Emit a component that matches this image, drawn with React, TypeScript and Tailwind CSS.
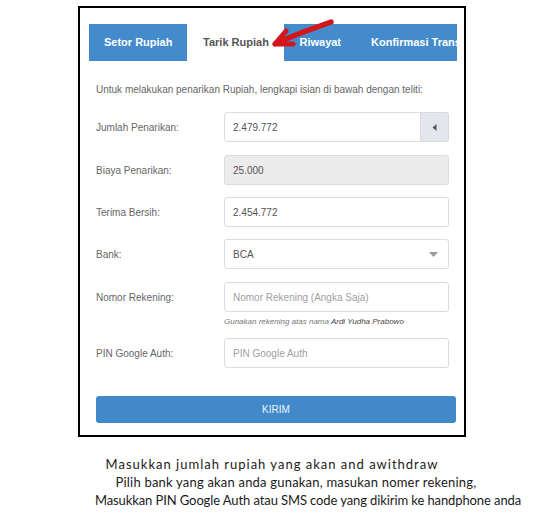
import React from "react";

const tabs = [
  { label: "Setor Rupiah", active: false },
  { label: "Tarik Rupiah", active: true },
  { label: "Riwayat", active: false },
  { label: "Konfirmasi Transfer", active: false },
];

const Label: React.FC<{ children: React.ReactNode }> = ({ children }) => (
  <div className="w-[128px] shrink-0 text-[10px] text-[#666]">{children}</div>
);

const TextField: React.FC<{ value?: string; placeholder?: string; disabled?: boolean }> = ({
  value,
  placeholder,
  disabled,
}) => (
  <div
    className={`w-[225px] h-[30px] flex items-center px-[8px] rounded-[3px] border border-[#dcdcdc] text-[10px] ${
      disabled ? "bg-[#ececec]" : "bg-white"
    } ${value ? "text-[#555]" : "text-[#a0a0a0]"}`}
  >
    {value ?? placeholder}
  </div>
);

const FormRow: React.FC<{ label: string; className?: string; children: React.ReactNode }> = ({
  label,
  className,
  children,
}) => (
  <div className={`flex items-center ${className ?? ""}`}>
    <Label>{label}</Label>
    {children}
  </div>
);

export default function App() {
  return (
    <div className="w-[536px] h-[523px] bg-white relative" style={{ fontFamily: '"Liberation Sans", Arial, sans-serif' }}>
      <div className="ml-[78px] pt-[6px]">
        <div className="w-[388px] h-[431px] border-2 border-black pt-[16px] pl-[9px] pr-[7px]">
          {/* tab bar */}
          <div className="h-[37px] flex bg-[#438bcb] overflow-hidden">
            {tabs.map((t) => (
              <div
                key={t.label}
                className={`px-[15px] shrink-0 whitespace-nowrap flex items-center text-[11px] font-bold ${
                  t.active ? "bg-white text-[#555] w-[97px] justify-center" : "text-white"
                }`}
              >
                {t.label}
              </div>
            ))}
          </div>

          <div className="pl-[7px] pr-[1px] pt-[22px]">
            <p className="text-[10px] leading-[14px] text-[#666]">
              Untuk melakukan penarikan Rupiah, lengkapi isian di bawah dengan teliti:
            </p>

            <FormRow label="Jumlah Penarikan:" className="mt-[15px]">
              <div className="w-[225px] h-[30px] flex">
                <div className="flex-1 flex items-center px-[8px] rounded-l-[3px] border border-[#dcdcdc] text-[10px] text-[#555]">
                  2.479.772
                </div>
                <div className="w-[28px] flex items-center justify-center rounded-r-[3px] bg-[#e3e7eb] border border-l-0 border-[#d6dadf]">
                  <svg width="5" height="7" viewBox="0 0 5 7">
                    <path d="M4.5 0 L0.5 3.5 L4.5 7 Z" fill="#555" />
                  </svg>
                </div>
              </div>
            </FormRow>

            <FormRow label="Biaya Penarikan:" className="mt-[13px]">
              <TextField value="25.000" disabled />
            </FormRow>

            <FormRow label="Terima Bersih:" className="mt-[12px]">
              <TextField value="2.454.772" />
            </FormRow>

            <FormRow label="Bank:" className="mt-[12px]">
              <div className="w-[225px] h-[30px] flex items-center justify-between px-[8px] rounded-[3px] border border-[#dcdcdc] text-[10px] text-[#555]">
                <span>BCA</span>
                <svg width="9" height="5" viewBox="0 0 9 5" className="mr-[2px]">
                  <path d="M0 0 H9 L4.5 5 Z" fill="#999" />
                </svg>
              </div>
            </FormRow>

            <FormRow label="Nomor Rekening:" className="mt-[13px]">
              <TextField placeholder="Nomor Rekening (Angka Saja)" />
            </FormRow>
            <div className="ml-[128px] mt-[5px] text-[8px] leading-[10px] italic text-[#777]">
              Gunakan rekening atas nama <span className="text-[#444]">Ardi Yudha Prabowo</span>
            </div>

            <FormRow label="PIN Google Auth:" className="mt-[11px]">
              <TextField placeholder="PIN Google Auth" />
            </FormRow>

            <button className="mt-[28px] w-[360px] h-[27px] rounded-[3px] bg-[#4189c9] text-[10px] text-[#eef4fa]">
              KIRIM
            </button>
          </div>
        </div>
      </div>

      {/* red pointer arrow over the active tab */}
      <svg className="absolute left-[266px] top-[12px]" width="74" height="42" viewBox="0 0 74 42">
        <g stroke="#d3161c" strokeLinecap="round" strokeLinejoin="round" fill="none">
          <path d="M10 31 Q 36 20 65 10" strokeWidth="5.5" />
          <path d="M9 32 L 20 19" strokeWidth="5" />
          <path d="M9 32 L 27 32" strokeWidth="5" />
        </g>
      </svg>

      <div className="mt-[18px] text-[13px] leading-[18px] text-[#1a1a1a]" style={{ fontFamily: "Lato, sans-serif" }}>
        <div className="text-center pl-[8px] tracking-[1px]">Masukkan jumlah rupiah yang akan and awithdraw</div>
        <div className="text-center pl-[56px] tracking-[0.2px]">Pilih bank yang akan anda gunakan, masukan nomer rekening,</div>
        <div className="text-center pl-[80px] tracking-[-0.1px]">Masukkan PIN Google Auth atau SMS code yang dikirim ke handphone anda</div>
      </div>
    </div>
  );
}
